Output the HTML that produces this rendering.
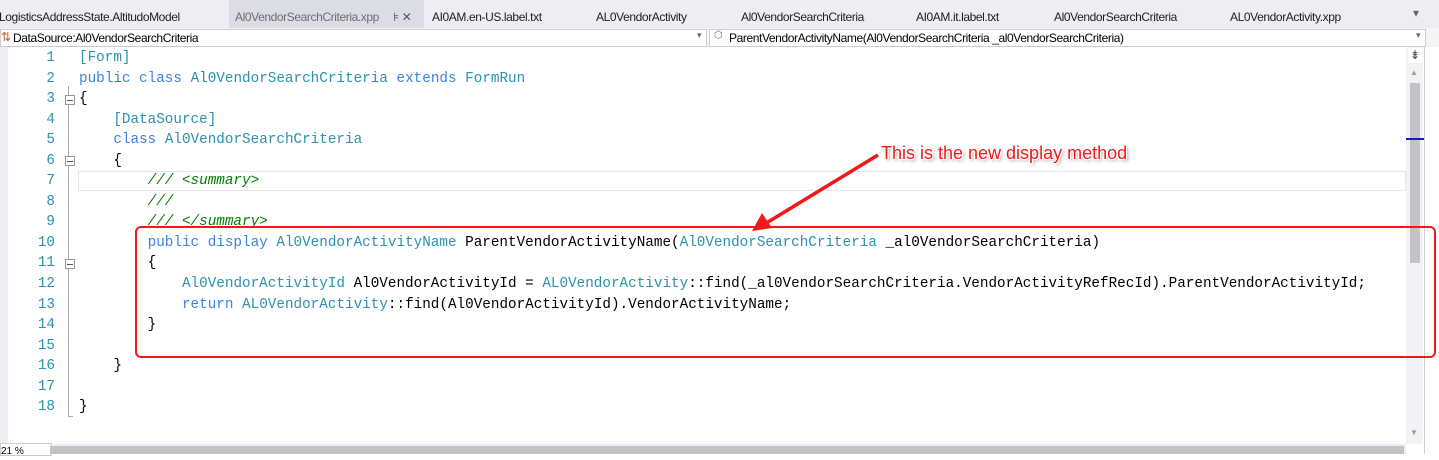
<!DOCTYPE html><html><head><style>
body{margin:0;width:1439px;height:454px;overflow:hidden;background:#fff;font-family:"Liberation Sans",sans-serif;position:relative}
.abs{position:absolute}
.tabs{left:0;top:0;width:1439px;height:28px;background:#eeeef2;font-size:12px;color:#1e1e1e;letter-spacing:-0.4px}
.tabs span{position:absolute;top:10px}
.nav{top:28px;left:0;width:1439px;height:19px;background:#f5f5f5;font-size:12px;letter-spacing:-0.4px}
.code{font-family:"Liberation Mono",monospace;font-size:14.3px;white-space:pre;color:#000}
.k{color:#3b83e0}.t{color:#2b91af}.c{color:#008000;font-style:italic}.g{color:#808080}
.fold{position:absolute;left:65px;width:8px;height:8px;border:1px solid #999;background:#fff}
.fold:after{content:"";position:absolute;left:1px;top:3.5px;width:6px;height:1px;background:#555}
</style></head><body>
<div class="abs tabs">
<span style="left:-1px">LogisticsAddressState.AltitudoModel</span>
<span style="left:229px;top:0;height:28px;width:195px;background:#dcdce4"></span>
<span style="left:235px;color:#6d6d6d">Al0VendorSearchCriteria.xpp</span>
<span style="left:393px;color:#555">⊧ ✕</span>
<span style="left:432px">AI0AM.en-US.label.txt</span>
<span style="left:596px">AL0VendorActivity</span>
<span style="left:741px">Al0VendorSearchCriteria</span>
<span style="left:916px">AI0AM.it.label.txt</span>
<span style="left:1054px">Al0VendorSearchCriteria</span>
<span style="left:1230px">AL0VendorActivity.xpp</span>
<span style="left:1413px;top:6px;color:#666">▾</span>
</div>
<div class="abs nav">
<div class="abs" style="left:0;top:1px;width:705px;height:16px;background:#fff;border:1px solid #ccc"></div>
<div class="abs" style="left:709px;top:1px;width:715px;height:16px;background:#fff;border:1px solid #ccc"></div>
<span class="abs" style="left:1px;top:2px;color:#c0621c">⇅</span>
<span class="abs" style="left:13px;top:3px">DataSource:Al0VendorSearchCriteria</span>
<span class="abs" style="left:697px;top:2px;font-size:9px;color:#666">▾</span>
<span class="abs" style="left:714px;top:2px;color:#7a4fb0;font-size:10px">⬡</span>
<span class="abs" style="left:729px;top:3px">ParentVendorActivityName(Al0VendorSearchCriteria _al0VendorSearchCriteria)</span>
<span class="abs" style="left:1416px;top:2px;font-size:9px;color:#666">▾</span>
</div>
<div class="abs" style="left:0;top:47px;width:8px;height:397px;background:#eeeef2"></div>
<div class="abs" style="left:68px;top:86px;width:1px;height:330px;background:#aaa"></div>
<div class="abs" style="left:68px;top:416px;width:5px;height:1px;background:#aaa"></div>
<div class="fold" style="top:95px"></div><div class="fold" style="top:156px"></div><div class="fold" style="top:259px"></div>
<div class="abs" style="left:78px;top:171px;width:1326px;height:18px;border:1px solid #e6e6ea"></div>
<div class="abs code" style="left:79px;top:48px;line-height:20.55px"><span class="t">[Form]</span>
<span class="k">public class</span> <span class="t">Al0VendorSearchCriteria</span> <span class="k">extends</span> <span class="t">FormRun</span>
{
    <span class="t">[DataSource]</span>
    <span class="k">class</span> <span class="t">Al0VendorSearchCriteria</span>
    {
        <span class="c">/// &lt;summary&gt;</span>
        <span class="c">///</span>
        <span class="c">/// &lt;/summary&gt;</span>
        <span class="k">public display</span> <span class="t">Al0VendorActivityName</span> ParentVendorActivityName(<span class="t">Al0VendorSearchCriteria</span> _al0VendorSearchCriteria)
        {
            <span class="t">Al0VendorActivityId</span> Al0VendorActivityId = <span class="t">AL0VendorActivity</span>::find(_al0VendorSearchCriteria.VendorActivityRefRecId).ParentVendorActivityId;
            <span class="k">return</span> <span class="t">AL0VendorActivity</span>::find(Al0VendorActivityId).VendorActivityName;
        }

    }

}</div>
<div class="abs" style="left:20px;top:48px;width:35px;text-align:right;color:#2b91af;font-family:'Liberation Mono',monospace;font-size:14.3px;line-height:20.55px;white-space:pre">1
2
3
4
5
6
7
8
9
10
11
12
13
14
15
16
17
18</div>
<div class="abs" style="left:1406px;top:47px;width:17px;height:397px;background:#f3f3f5"></div>
<div class="abs" style="left:1408px;top:48px;width:14px;height:15px;background:#fff;font-size:12px;text-align:center;color:#444">⇟</div>
<div class="abs" style="left:1410px;top:68px;font-size:8px;color:#999">▲</div>
<div class="abs" style="left:1410px;top:83px;width:10px;height:180px;background:#c2c3c9"></div>
<div class="abs" style="left:1406px;top:138px;width:18px;height:2px;background:#1a1ab4"></div>
<div class="abs" style="left:1410px;top:428px;font-size:8px;color:#999">▼</div>
<div class="abs" style="left:1424px;top:47px;width:1px;height:407px;background:#d0d0d8"></div>
<div class="abs" style="left:0;top:444px;width:1406px;height:10px;background:#eeeef2"></div>
<div class="abs" style="left:0;top:443px;width:50px;height:11px;background:#fff;border:1px solid #ccc;font-size:10px;line-height:16px">21 %</div>
<div class="abs" style="left:50px;top:446px;width:1354px;height:8px;background:#c2c3c9"></div>
<div class="abs" style="left:135px;top:226px;width:1297px;height:128px;border:2px solid #f01818;border-radius:6px"></div>
<svg class="abs" style="left:0;top:0" width="1439" height="454"><line x1="878" y1="155" x2="768" y2="222" stroke="#f01818" stroke-width="3.5"/><polygon points="752,231 762,213 772,228" fill="#f01818"/></svg>
<div class="abs" style="left:881px;top:143px;font-size:18px;color:#f01818;text-shadow:1px 1px 0 #fff,-1px -1px 0 #fff,1px -1px 0 #fff,-1px 1px 0 #fff,2px 2px 3px #999">This is the new display method</div>
</body></html>
